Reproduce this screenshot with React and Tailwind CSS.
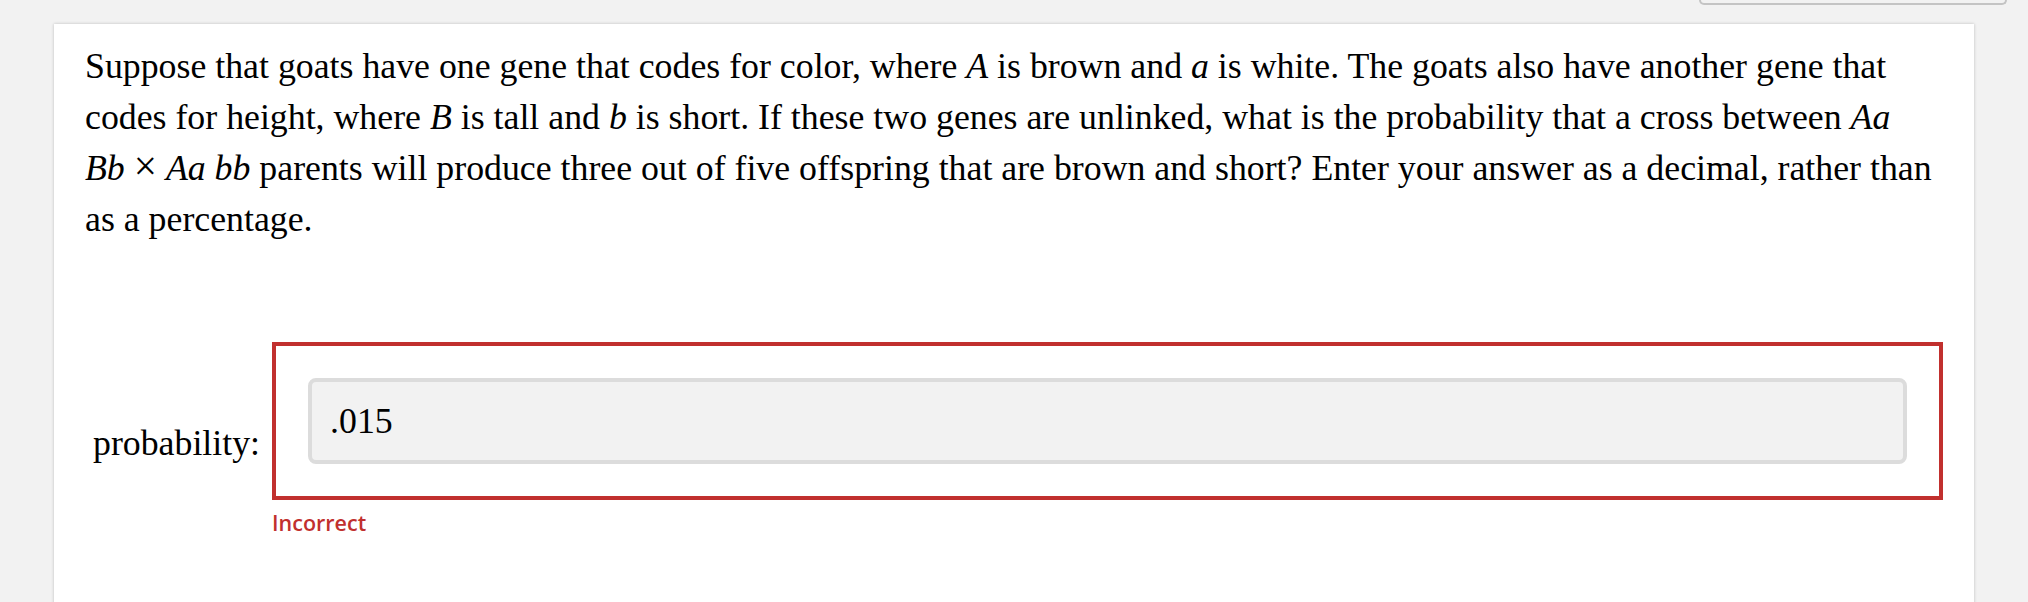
import React from "react";

const serif = { fontFamily: '"Liberation Serif", "Times New Roman", serif' };

const Question = () => (
  <p className="text-[35.8px] leading-[51px] text-black" style={serif}>
    Suppose that goats have one gene that codes for color, where <i>A</i> is brown and <i>a</i> is
    white. The goats also have another gene that codes for height, where <i>B</i> is tall and{" "}
    <i>b</i> is short. If these two genes are unlinked, what is the probability that a cross between{" "}
    <i>Aa</i> <i>Bb</i> <span className="text-[1.15em] leading-none">×</span> <i>Aa</i> <i>bb</i>{" "}
    parents will produce three out of five offspring that are brown and short? Enter your answer as
    a decimal, rather than as a percentage.
  </p>
);

export default function App() {
  return (
    <div className="min-h-screen bg-[#f2f2f2] flex flex-col overflow-hidden">
      {/* toolbar stub cut off at the top */}
      <div className="flex justify-end pr-[21px]">
        <div className="w-[308px] h-[5px] border-2 border-t-0 border-[#c4c4c4] rounded-b-[5px]" />
      </div>

      <div className="mx-[54px] mt-[19px] min-h-[600px] bg-white shadow-[0_0_3px_rgba(0,0,0,0.22)] pl-[31px] pr-[31px] pt-[17px]">
        <div className="pr-[4px]">
          <Question />
        </div>

        {/* answer row */}
        <div className="flex items-start mt-[97px]">
          <label
            className="ml-[8px] mr-[12px] mt-[76px] text-[35.8px] leading-[51px] text-black"
            style={serif}
          >
            probability:
          </label>
          <div className="flex-1 flex flex-col">
            <div className="border-4 border-[#c1302e] p-[32px]">
              <input
                readOnly
                value=".015"
                className="w-full h-[86px] border-4 border-[#dcdcdc] rounded-[8px] bg-[#f2f2f2] pl-[18px] pt-[13px] pb-[14px] text-[35.8px] leading-[51px] text-black outline-none"
                style={serif}
              />
            </div>
            <span
              className="mt-[8px] text-[21.5px] leading-[30px] font-semibold text-[#c1302e]"
              style={{ fontFamily: '"Open Sans", "Liberation Sans", sans-serif' }}
            >
              Incorrect
            </span>
          </div>
        </div>
      </div>
    </div>
  );
}
